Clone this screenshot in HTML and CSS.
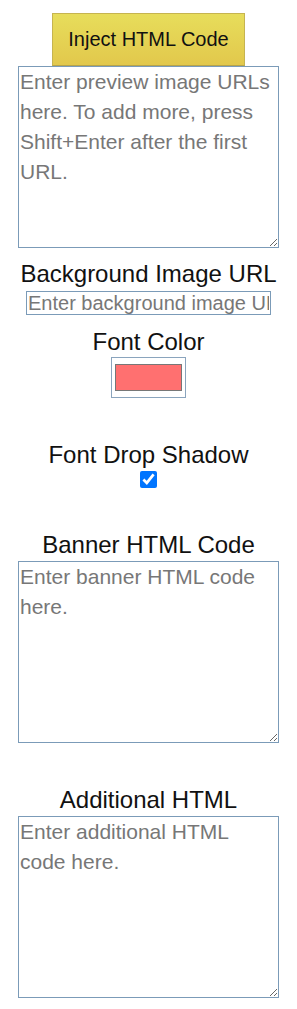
FILE: index.html
```html
<!DOCTYPE html>
<html>
<head>
<meta charset="utf-8">
<link rel="stylesheet" href="styles.css">
</head>
<body>
<div class="form">
  <button class="inject-btn" type="button">Inject HTML Code</button>
  <textarea class="area" placeholder="Enter preview image URLs here. To add more, press Shift+Enter after the first URL."></textarea>

  <label class="lbl lbl-bg">Background Image URL</label>
  <input class="url-input" type="text" placeholder="Enter background image URL here.">

  <label class="lbl lbl-color">Font Color</label>
  <input class="color-input" type="color" value="#ff7070">

  <label class="lbl lbl-far">Font Drop Shadow</label>
  <input class="check" type="checkbox" checked>

  <label class="lbl lbl-far">Banner HTML Code</label>
  <textarea class="area" placeholder="Enter banner HTML code here."></textarea>

  <label class="lbl lbl-far">Additional HTML</label>
  <textarea class="area" placeholder="Enter additional HTML code here."></textarea>
</div>
</body>
</html>
```

FILE: styles.css
```css
html, body {
  margin: 0;
  padding: 0;
  background: #ffffff;
}

body {
  font-family: "Liberation Sans", Arial, sans-serif;
  color: #111111;
}

.form {
  display: flex;
  flex-direction: column;
  align-items: center;
  padding-top: 13px;
}

.inject-btn {
  display: block;
  box-sizing: border-box;
  width: 193px;
  height: 53px;
  margin: 0;
  padding: 0;
  white-space: nowrap;
  border: 1px solid #c6b450;
  border-bottom-color: #b8a44a;
  border-radius: 0;
  background: linear-gradient(to bottom, #e7dd5b 0%, #e2c84c 100%);
  font-family: "Liberation Sans", Arial, sans-serif;
  font-size: 20px;
  line-height: 23px;
  color: #111111;
}

.area {
  display: block;
  box-sizing: border-box;
  width: 261px;
  height: 182px;
  margin: 0;
  padding: 0 1px;
  border: 1px solid #7b9bb8;
  border-radius: 0;
  font-family: "Liberation Sans", Arial, sans-serif;
  font-size: 21px;
  line-height: 30px;
  color: #111111;
  background: #ffffff;
}

.area::placeholder,
.url-input::placeholder {
  color: #777777;
  opacity: 1;
}

.lbl {
  display: block;
  font-size: 24px;
  line-height: 27px;
  text-align: center;
  color: #111111;
}

.lbl-bg {
  margin-top: 12px;
  margin-bottom: 4px;
}

.lbl-color {
  margin-top: 13px;
  margin-bottom: 2px;
}

.lbl-far {
  margin-top: 43px;
  margin-bottom: 3px;
}

.url-input {
  display: block;
  box-sizing: border-box;
  width: 245px;
  height: 24px;
  margin: 0;
  padding: 0 1px;
  border: 1px solid #7b9bb8;
  border-radius: 0;
  font-family: "Liberation Sans", Arial, sans-serif;
  font-size: 20px;
  color: #111111;
}

.color-input {
  display: block;
  box-sizing: border-box;
  width: 75px;
  height: 41px;
  margin: 0;
  padding: 6px 3px;
  border: 1px solid #8aa4bd;
  border-radius: 0;
  background: #ffffff;
  -webkit-appearance: none;
  appearance: none;
}

.color-input::-webkit-color-swatch-wrapper {
  padding: 0;
}

.color-input::-webkit-color-swatch {
  border: 1px solid #777777;
  border-radius: 0;
}

.check {
  display: block;
  width: 17px;
  height: 17px;
  margin: 0;
  accent-color: #0075ff;
}
```
